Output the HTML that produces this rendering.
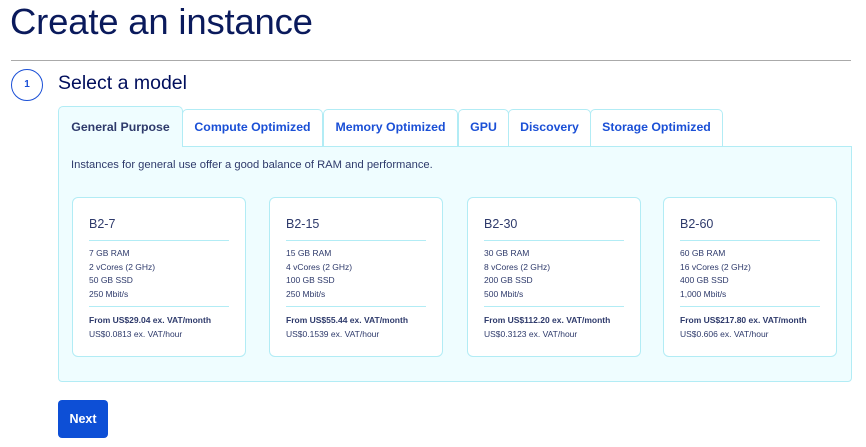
<!DOCTYPE html>
<html><head><meta charset="utf-8"><style>
*{margin:0;padding:0;box-sizing:border-box}
body{width:866px;height:447px;background:#fff;font-family:"Liberation Sans",sans-serif;color:#000e5c;position:relative;overflow:hidden}
.a{position:absolute}
h1{position:absolute;left:10px;top:1px;font-size:36.5px;font-weight:normal;color:#0a1a5c;letter-spacing:-0.2px;line-height:42px}
.hr{left:11px;top:60px;width:840px;height:1px;background:#aaa}
.circ{left:11px;top:69px;width:32px;height:32px;border:1.5px solid #1a4fd6;border-radius:50%;font-size:10px;font-weight:bold;color:#1a4fd6;text-align:center;line-height:29px}
.h2{left:58px;top:72px;font-size:19.5px;color:#000e5c}
.tab{position:absolute;top:109px;height:37px;border:1px solid #b2ecf5;border-bottom:none;border-radius:5px 5px 0 0;background:#fff;color:#1a4fd6;font-weight:bold;font-size:12.3px;text-align:center;line-height:35px}
.tab.act{top:106px;height:41px;background:#effdff;color:#2e3a6b;z-index:2;line-height:40px}
.panel{left:58px;top:146px;width:794px;height:236px;background:#effdff;border:1px solid #b2ecf5;border-radius:0 0 4px 4px}
.desc{left:71px;top:159px;font-size:11.2px;color:#2e3a6b}
.card{position:absolute;top:197px;width:174px;height:160px;background:#fff;border:1px solid #b2ecf5;border-radius:6px;color:#2e3a6b}
.card .t{position:absolute;left:16px;top:19px;font-size:12.5px}
.card .l{position:absolute;left:16px;right:16px;height:1px;background:#b2ecf5}
.card .s{position:absolute;left:16px;font-size:8.5px;line-height:13.6px}
.btn{left:58px;top:400px;width:50px;height:38px;background:#0d4fd6;border-radius:4px;color:#fff;font-weight:bold;font-size:12.5px;text-align:center;line-height:38px}
</style></head><body>
<h1>Create an instance</h1>
<div class="a hr"></div>
<div class="a circ">1</div>
<div class="a h2">Select a model</div>
<div class="a panel"></div>
<div class="tab act" style="left:58px;width:125px">General Purpose</div>
<div class="tab" style="left:182px;width:141px">Compute Optimized</div>
<div class="tab" style="left:323px;width:135px">Memory Optimized</div>
<div class="tab" style="left:458px;width:51px">GPU</div>
<div class="tab" style="left:508px;width:83px">Discovery</div>
<div class="tab" style="left:590px;width:133px">Storage Optimized</div>
<div class="a desc">Instances for general use offer a good balance of RAM and performance.</div>

<div class="card" style="left:72px"><div class="t">B2-7</div><div class="l" style="top:42px"></div>
<div class="s" style="top:49px">7 GB RAM<br>2 vCores (2 GHz)<br>50 GB SSD<br>250 Mbit/s</div><div class="l" style="top:108px"></div>
<div class="s" style="top:116px"><b>From US$29.04 ex. VAT/month</b><br>US$0.0813 ex. VAT/hour</div></div>

<div class="card" style="left:269px"><div class="t">B2-15</div><div class="l" style="top:42px"></div>
<div class="s" style="top:49px">15 GB RAM<br>4 vCores (2 GHz)<br>100 GB SSD<br>250 Mbit/s</div><div class="l" style="top:108px"></div>
<div class="s" style="top:116px"><b>From US$55.44 ex. VAT/month</b><br>US$0.1539 ex. VAT/hour</div></div>

<div class="card" style="left:467px"><div class="t">B2-30</div><div class="l" style="top:42px"></div>
<div class="s" style="top:49px">30 GB RAM<br>8 vCores (2 GHz)<br>200 GB SSD<br>500 Mbit/s</div><div class="l" style="top:108px"></div>
<div class="s" style="top:116px"><b>From US$112.20 ex. VAT/month</b><br>US$0.3123 ex. VAT/hour</div></div>

<div class="card" style="left:663px"><div class="t">B2-60</div><div class="l" style="top:42px"></div>
<div class="s" style="top:49px">60 GB RAM<br>16 vCores (2 GHz)<br>400 GB SSD<br>1,000 Mbit/s</div><div class="l" style="top:108px"></div>
<div class="s" style="top:116px"><b>From US$217.80 ex. VAT/month</b><br>US$0.606 ex. VAT/hour</div></div>

<div class="a btn">Next</div>
</body></html>
